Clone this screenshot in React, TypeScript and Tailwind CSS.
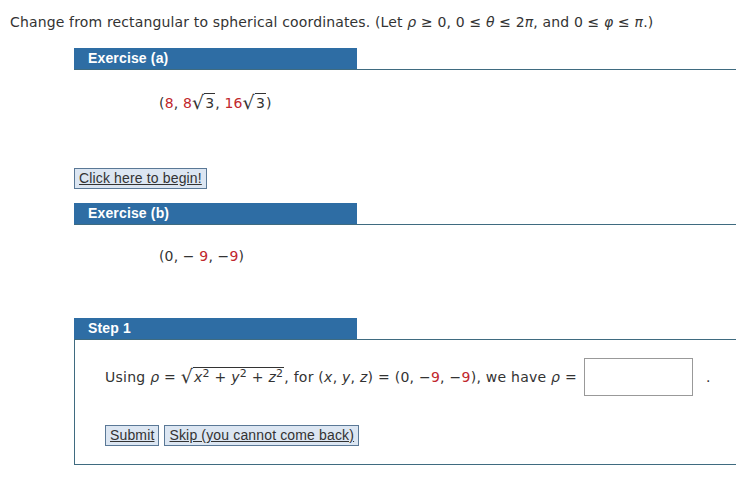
import React from "react";

const red = "text-[#c1272d]";

function Sqrt({ children }: { children: React.ReactNode }) {
  return (
    <span className="inline-block whitespace-nowrap">
      <span className="text-[19px] leading-none relative top-[1px]">√</span>
      <span className="inline-block border-t border-[#333] leading-[16px] pt-[1px] px-[1px]">{children}</span>
    </span>
  );
}

function Header({ title }: { title: string }) {
  return (
    <div className="flex border-b border-[#3f6b80]">
      <div className="w-[283px] h-[21px] bg-[#2e6da4] pl-[14px] text-white font-bold text-[14px] leading-[21px] font-['Liberation_Sans',Arial,sans-serif]">
        {title}
      </div>
    </div>
  );
}

function Btn({ label }: { label: string }) {
  return (
    <button className="h-[21px] px-[4px] bg-[#dce6f2] border border-[#5a7896] text-[#333] underline text-[14px] leading-[19px] font-['Liberation_Sans',Arial,sans-serif]">
      {label}
    </button>
  );
}

export default function App() {
  return (
    <div className="w-[736px] h-[479px] overflow-hidden bg-white text-[#333] text-[14px] tracking-[0.15px] font-['DejaVu_Sans',Verdana,sans-serif]">
      <p className="pl-[10px] pt-[13px] leading-[18px]">
        Change from rectangular to spherical coordinates. (Let <i>ρ</i> ≥ 0, 0 ≤ <i>θ</i> ≤ 2<i>π</i>, and 0 ≤ <i>φ</i> ≤ <i>π</i>.)
      </p>

      <div className="ml-[74px] mt-[17px]">
        <Header title="Exercise (a)" />
        <div className="pl-[85px] mt-[21px] h-[24px] leading-[24px]">
          (<span className={red}>8</span>, <span className={red}>8</span><Sqrt>3</Sqrt>, <span className={red}>16</span><Sqrt>3</Sqrt>)
        </div>

        <div className="mt-[53px]">
          <Btn label="Click here to begin!" />
        </div>

        <div className="mt-[14px]">
          <Header title="Exercise (b)" />
        </div>
        <div className="pl-[85px] mt-[22px] leading-[18px]">
          (0, − <span className={red}>9</span>, −<span className={red}>9</span>)
        </div>

        <div className="mt-[53px]">
          <Header title="Step 1" />
        </div>
        <div className="border-l border-b border-[#3f6b80] h-[125px] pl-[30px] pt-[18px]">
          <div className="flex items-center h-[38px]">
            <span className="whitespace-nowrap tracking-[0.25px]">
              Using <i>ρ</i> = <Sqrt>
                <i>x</i><sup className="text-[11px]">2</sup> + <i>y</i><sup className="text-[11px]">2</sup> + <i>z</i><sup className="text-[11px]">2</sup>
              </Sqrt>, for (<i>x</i>, <i>y</i>, <i>z</i>) = (0, −<span className={red}>9</span>, −<span className={red}>9</span>), we have <i>ρ</i> =
            </span>
            <input className="ml-[7px] w-[109px] h-[38px] border border-[#999]" />
            <span className="ml-[13px]">.</span>
          </div>
          <div className="mt-[29px] flex gap-[5px]">
            <Btn label="Submit" />
            <Btn label="Skip (you cannot come back)" />
          </div>
        </div>
      </div>
    </div>
  );
}
